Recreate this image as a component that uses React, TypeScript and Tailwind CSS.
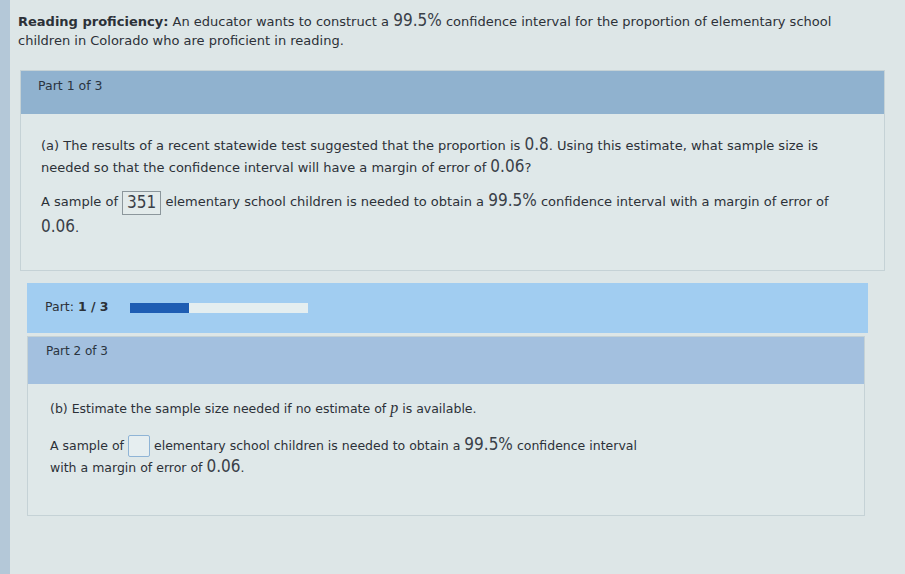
import React from 'react';

const Num: React.FC<{ children: React.ReactNode }> = ({ children }) => (
  <span
    className="text-[17px] leading-[1] font-light text-[#3a4048] [font-stretch:condensed]"
    style={{ fontFamily: '"DejaVu Sans Condensed", "DejaVu Sans", sans-serif' }}
  >
    {children}
  </span>
);

const App: React.FC = () => {
  return (
    <div
      className="w-[905px] h-[574px] overflow-hidden bg-[#dde6e7] text-[#2c3138] text-[13px] flex"
      style={{ fontFamily: '"DejaVu Sans", Verdana, sans-serif' }}
    >
      <div className="w-[10px] shrink-0 bg-[#b4c8d8]" />
      <div className="flex-1 flex flex-col">
        <p className="pl-[8px] pt-[12px] leading-[19px] max-w-[840px]">
          <span className="font-bold">Reading proficiency:</span> An educator wants to construct a <Num>99.5%</Num> confidence interval for the proportion of elementary school children in Colorado who are proficient in reading.
        </p>

        <div className="ml-[10px] mr-[20px] mt-[20px] border border-[#c5d2d6] bg-[#dfe8e9]">
          <div className="h-[43px] bg-[#90b2cf] pt-[6px] pl-[17px] text-[#2a3440] text-[12.5px] leading-[18px]">Part 1 of 3</div>
          <div className="pl-[20px] pr-[50px] pt-[21px] pb-[30px]">
            <p className="leading-[22px] max-w-[790px]">
              (a) The results of a recent statewide test suggested that the proportion is <Num>0.8</Num>. Using this estimate, what sample size is needed so that the confidence interval will have a margin of error of <Num>0.06</Num>?
            </p>
            <p className="mt-[10px] leading-[25px] max-w-[790px]">
              A sample of{' '}
              <span className="inline-flex items-center justify-center h-[24px] px-[4px] border border-[#8c979c] bg-[#e3ebeb] align-middle">
                <Num>351</Num>
              </span>{' '}
              elementary school children is needed to obtain a <Num>99.5%</Num> confidence interval with a margin of error of <Num>0.06</Num>.
            </p>
          </div>
        </div>

        <div className="ml-[17px] mr-[37px] mt-[12px] h-[50px] bg-[#a1cdf1] flex items-center pl-[18px] gap-[21px] text-[12.5px]">
          <span>
            Part: <span className="font-bold">1 / 3</span>
          </span>
          <div className="w-[178px] h-[10px] bg-[#e4eef0] flex">
            <div className="w-[59px] h-full bg-[#1f5db3]" />
          </div>
        </div>

        <div className="ml-[17px] mr-[40px] mt-[3px] border border-[#c5d2d6] bg-[#dfe8e9]">
          <div className="h-[47px] bg-[#a3c0df] pt-[5px] pl-[18px] text-[#2a3440] text-[12px] leading-[18px]">Part 2 of 3</div>
          <div className="pl-[22px] pr-[40px] pt-[15px] pb-[36px] text-[12.5px]">
            <p className="leading-[20px]">
              (b) Estimate the sample size needed if no estimate of{' '}
              <span className="italic text-[16px] leading-[1]" style={{ fontFamily: '"Liberation Serif", serif' }}>p</span> is available.
            </p>
            <p className="mt-[16px] leading-[22px] max-w-[600px]">
              A sample of{' '}
              <span className="inline-block w-[22px] h-[22px] border border-[#8fb4d6] bg-[#e6eef0] align-middle rounded-[2px]" />{' '}
              elementary school children is needed to obtain a <Num>99.5%</Num> confidence interval with a margin of error of <Num>0.06</Num>.
            </p>
          </div>
        </div>
      </div>
    </div>
  );
};

export default App;
